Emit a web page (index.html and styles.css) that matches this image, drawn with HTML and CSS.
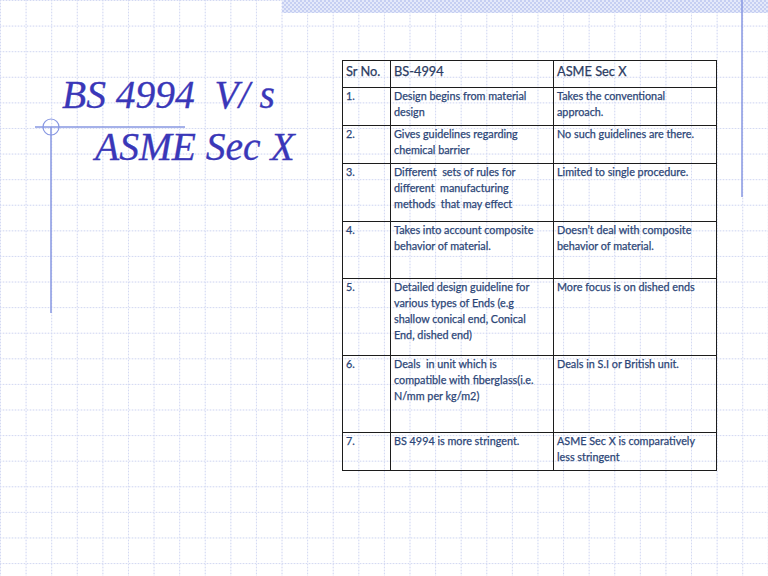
FILE: index.html
```html
<!DOCTYPE html>
<html lang="en">
<head>
<meta charset="utf-8">
<title>BS 4994 V/s ASME Sec X</title>
<link rel="stylesheet" href="styles.css">
</head>
<body>
<div class="slide">
  <div class="band"></div>
  <div class="main">
    <h1 class="title">
      <span class="t1">BS 4994&nbsp; V/ s</span>
      <span class="t2">ASME Sec X</span>
    </h1>
    <table class="cmp">
      <colgroup>
        <col class="c1"><col class="c2"><col class="c3">
      </colgroup>
      <thead>
        <tr class="hd"><th>Sr No.</th><th>BS-4994</th><th>ASME Sec X</th></tr>
      </thead>
      <tbody>
        <tr class="h38"><td>1.</td><td>Design begins from material<br>design</td><td>Takes the conventional<br>approach.</td></tr>
        <tr class="h38"><td>2.</td><td>Gives guidelines regarding<br>chemical barrier</td><td>No such guidelines are there.</td></tr>
        <tr class="h58"><td>3.</td><td>Different&nbsp; sets of rules for<br>different&nbsp; manufacturing<br>methods&nbsp; that may effect</td><td>Limited to single procedure.</td></tr>
        <tr class="h57"><td>4.</td><td>Takes into account composite<br>behavior of material.</td><td>Doesn’t deal with composite<br>behavior of material.</td></tr>
        <tr class="h77"><td>5.</td><td>Detailed design guideline for<br>various types of Ends (e.g<br>shallow conical end, Conical<br>End, dished end)</td><td>More focus is on dished ends</td></tr>
        <tr class="h77"><td>6.</td><td>Deals&nbsp; in unit which is<br>compatible with fiberglass(i.e.<br>N/mm per kg/m2)</td><td>Deals in S.I or British unit.</td></tr>
        <tr class="h38"><td>7.</td><td>BS 4994 is more stringent.</td><td>ASME Sec X is comparatively<br>less stringent</td></tr>
      </tbody>
    </table>
  </div>
  <svg class="ornament" width="768" height="576" viewBox="0 0 768 576" aria-hidden="true">
    <line x1="35" y1="127" x2="185" y2="127" stroke="#8797e2" stroke-width="1.5"/>
    <circle cx="51" cy="127" r="8" fill="none" stroke="#8797e2" stroke-width="1.2"/>
    <line x1="51" y1="127" x2="51" y2="313" stroke="#8797e2" stroke-width="1.5"/>
    <line x1="742" y1="0" x2="742" y2="197" stroke="#8797e2" stroke-width="1.5"/>
  </svg>
</div>
</body>
</html>
```

FILE: styles.css
```css
html, body {
  margin: 0;
  padding: 0;
  background: #ffffff;
}

.slide {
  position: relative;
  width: 768px;
  height: 576px;
  overflow: hidden;
  background-color: #ffffff;
  background-image:
    conic-gradient(at 1px 1px, transparent 75%, #d3d9f2 75%),
    conic-gradient(at 1px 1px, transparent 75%, #d3d9f2 75%),
    linear-gradient(to bottom, #eff1fb 1px, transparent 1px),
    linear-gradient(to right, #eff1fb 1px, transparent 1px);
  background-size: 3px 25.6px, 25.6px 3px, 25.6px 25.6px, 25.6px 25.6px;
}

.band {
  height: 13px;
  margin-left: 282px;
  background-color: #ffffff;
  background-image: repeating-conic-gradient(#c6cff2 0 25%, #e4e9fa 0 50%);
  background-size: 4px 4px;
}

.main {
  display: flex;
  align-items: flex-start;
  padding-top: 47px;
}

.title {
  width: 342px;
  flex: none;
  margin: 9px 0 0 0;
  display: flex;
  flex-direction: column;
  font-family: "Liberation Serif", "DejaVu Serif", serif;
  font-style: italic;
  font-weight: normal;
  font-size: 39.5px;
  line-height: 52px;
  color: #3a37b8;
  white-space: nowrap;
  -webkit-text-stroke: 0.3px #3a37b8;
}

.t1 { padding-left: 62px; }
.t2 { padding-left: 95px; }

.cmp {
  border-collapse: collapse;
  table-layout: fixed;
  width: 374px;
  font-family: Lato, "Liberation Sans", sans-serif;
  border: 1.5px solid #2a2a2a;
}

.c1 { width: 48px; }
.c2 { width: 163px; }
.c3 { width: 163px; }

.cmp th,
.cmp td {
  border: 1px solid #1c1c1c;
  text-align: left;
  vertical-align: top;
  white-space: nowrap;
}

.cmp th {
  font-size: 12.8px;
  font-weight: normal;
  color: #2b3b62;
  line-height: 21px;
  padding: 0 3px;
  -webkit-text-stroke: 0.25px #2b3b62;
}

.cmp td {
  font-size: 10.8px;
  color: #2c4677;
  line-height: 16px;
  padding: 0 3px;
  -webkit-text-stroke: 0.25px #2c4677;
}

.hd { height: 27px; }
.h38 { height: 38px; }
.h57 { height: 57px; }
.h58 { height: 58px; }
.h77 { height: 77px; }

.ornament {
  position: absolute;
  left: 0;
  top: 0;
  pointer-events: none;
}
```
